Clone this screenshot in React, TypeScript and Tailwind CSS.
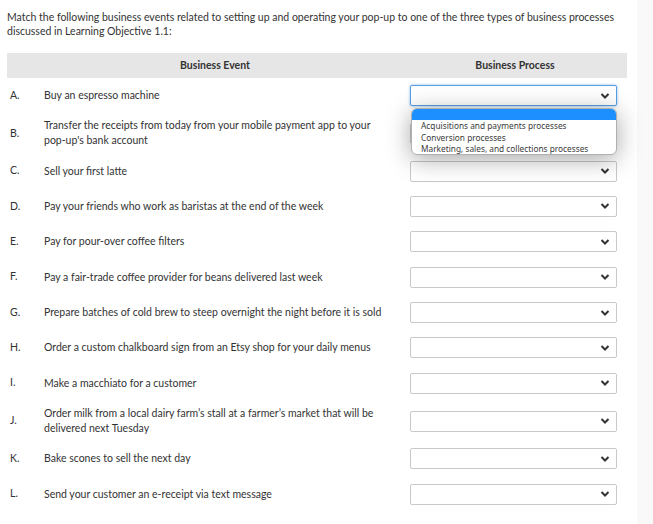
import React from "react";

const rows: [string, string][] = [
  ["A.", "Buy an espresso machine"],
  ["B.", "Transfer the receipts from today from your mobile payment app to your pop-up's bank account"],
  ["C.", "Sell your first latte"],
  ["D.", "Pay your friends who work as baristas at the end of the week"],
  ["E.", "Pay for pour-over coffee filters"],
  ["F.", "Pay a fair-trade coffee provider for beans delivered last week"],
  ["G.", "Prepare batches of cold brew to steep overnight the night before it is sold"],
  ["H.", "Order a custom chalkboard sign from an Etsy shop for your daily menus"],
  ["I.", "Make a macchiato for a customer"],
  ["J.", "Order milk from a local dairy farm\u2019s stall at a farmer\u2019s market that will be delivered next Tuesday"],
  ["K.", "Bake scones to sell the next day"],
  ["L.", "Send your customer an e-receipt via text message"],
];

function Chevron() {
  return (
    <svg width="10" height="7" viewBox="0 0 10 7" className="absolute right-[6px] top-1/2 -translate-y-1/2">
      <path d="M1.5 1.5 L5 5 L8.5 1.5" fill="none" stroke="#333" strokeWidth="2" />
    </svg>
  );
}

function Select({ focused }: { focused?: boolean }) {
  return (
    <div
      className={
        focused
          ? "relative h-[21px] w-[207px] my-[2.2px] bg-white border border-[#5a9ee0] rounded-[2px] shadow-[0_0_3px_rgba(60,140,230,0.6)]"
          : "relative h-[21px] w-[207px] my-[2.2px] bg-white border border-[#c9c9c9] rounded-[2px]"
      }
    >
      <Chevron />
    </div>
  );
}

export default function App() {
  return (
    <div className="min-h-[524px] w-[653px] bg-[#f9f9f9]" style={{ fontFamily: "Lato, 'Liberation Sans', sans-serif" }}>
      <div className="w-[637px] min-h-[524px] bg-white text-[#333] text-[10.5px] pl-[7px] pt-[10px]">
        <p className="leading-[14px] pr-[16px]">
          Match the following business events related to setting up and operating your pop-up to one of the three types of business processes discussed in Learning Objective 1.1:
        </p>
        <div className="mt-[15px] w-[620px]">
          <div className="flex h-[25px] items-center bg-[#e6e6e6] font-bold">
            <div className="w-[396px] pl-[20px] text-center">Business Event</div>
            <div className="w-[224px] text-center">Business Process</div>
          </div>
          <div className="mt-[0px]">
            {rows.map(([l, t], i) => (
              <div key={l} className="flex items-center py-[5px] relative">
                <div className="w-[37px] pl-[3px] shrink-0">{l}</div>
                <div className="w-[359px] pr-[12px] leading-[15px] shrink-0">{t}</div>
                <div className="w-[224px] pl-[7px] shrink-0 relative">
                  <Select focused={i === 0} />
                  {i === 0 && (
                    <div className="absolute left-[8px] top-[25px] w-[206px] h-[47px] z-10 bg-white rounded-[6px] border border-[#b0b0b0] shadow-[0_4px_24px_rgba(0,0,0,0.35)] overflow-hidden text-[8.3px] leading-[11.5px] text-[#3a3a3a]" style={{ fontFamily: "'Noto Sans', Lato, sans-serif" }}>
                      <div className="h-[11px] bg-[#1e8fff]" />
                      <div className="pl-[9px]">
                        <div>Acquisitions and payments processes</div>
                        <div>Conversion processes</div>
                        <div>Marketing, sales, and collections processes</div>
                      </div>
                    </div>
                  )}
                </div>
              </div>
            ))}
          </div>
        </div>
      </div>
    </div>
  );
}
